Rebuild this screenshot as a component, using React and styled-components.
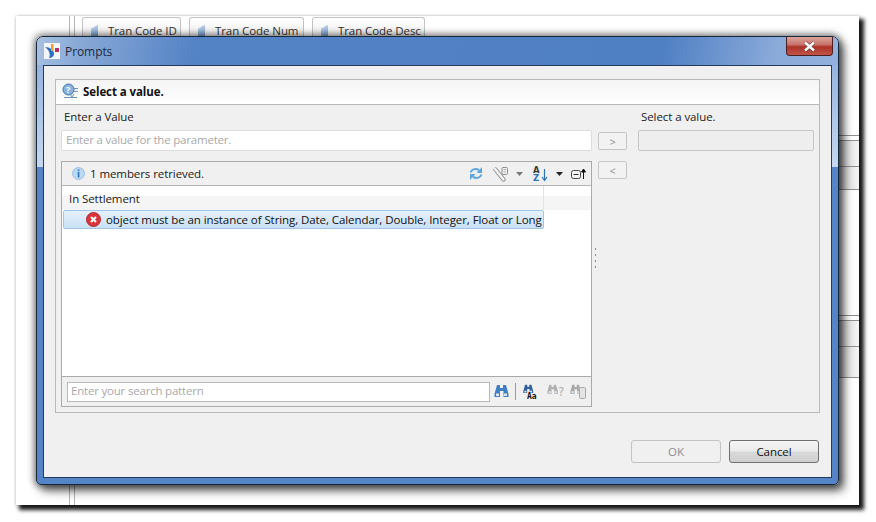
import styled, { createGlobalStyle } from 'styled-components';

const GlobalStyle = createGlobalStyle`
  html, body {
    margin: 0;
    padding: 0;
    background: #fff;
  }
  body {
    width: 876px;
    height: 522px;
    overflow: hidden;
    font-family: "Open Sans", "Noto Sans", sans-serif;
    font-size: 11.5px;
    letter-spacing: -0.08px;
    color: #1a1a1a;
  }
  svg {
    flex: none;
  }
`;

// the app window behind the dialog
const Sheet = styled.div`
  position: relative;
  box-sizing: border-box;
  width: 843px;
  height: 489px;
  margin: 16px 0 0 16px;
  padding-left: 53px;
  background: #fff;
  box-shadow: 0 0 3px rgba(0, 0, 0, 0.25), 4px 4px 4px 1px rgba(0, 0, 0, 0.9);
`;

const BackRail = styled.div`
  height: 100%;
  padding-left: 4px;
  border-left: 1px solid #b5b5b5;
`;

const BackTabs = styled.div`
  display: flex;
  align-items: flex-start;
  gap: 8px;
  height: 100%;
  padding: 1px 0 0 7px;
  box-sizing: border-box;
  border-left: 1px solid #b5b5b5;
`;

const BackTab = styled.div`
  display: flex;
  align-items: center;
  box-sizing: border-box;
  width: ${(p) => p.$w}px;
  height: 20px;
  padding: 6px 0 0 8px;
  gap: 10px;
  border: 1px solid #c4c4c4;
  border-bottom: 0;
  border-radius: 3px 3px 0 0;
  background: linear-gradient(#fff, #f1f1f1);
  color: #333;
  white-space: nowrap;
`;

const TabMark = styled.span`
  display: block;
  flex: none;
  width: 7px;
  height: 12px;
  background: linear-gradient(160deg, #c9dcf0, #6d9bcb);
  clip-path: polygon(100% 0, 100% 100%, 0 100%, 0 35%);
`;

const BackBand = styled.div`
  position: absolute;
  right: 0;
  width: 20px;
  top: ${(p) => p.$top}px;
  height: ${(p) => p.$h}px;
  box-sizing: border-box;
  border-top: 1px solid #8f8f8f;
  border-bottom: 1px solid #8f8f8f;
  background: ${(p) => (p.$plain ? '#fff' : 'linear-gradient(90deg, #d2d2d2, #f5f5f5)')};
`;

const Dialog = styled.div`
  position: absolute;
  left: 20px;
  top: 20px;
  box-sizing: border-box;
  width: 803px;
  height: 449px;
  display: flex;
  flex-direction: column;
  padding: 0 6px 6px 6px;
  border: 1px solid #17273c;
  border-radius: 7px 7px 5px 5px;
  background:
    linear-gradient(180deg, transparent 0, transparent 130px, #5585c6 130px, #5585c6 100%),
    linear-gradient(180deg, #8aaadb 0, #a4bfe4 60px, #c6d7ef 129px);
  box-shadow: 0 0 7px 2px rgba(0, 0, 0, 0.5), 5px 6px 10px rgba(0, 0, 0, 0.55);
`;

const TitleBar = styled.div`
  flex: none;
  display: flex;
  align-items: center;
  gap: 5px;
  height: 28px;
  margin: 0 -6px;
  padding: 0 0 0 7px;
  border-radius: 6px 6px 0 0;
  background:
    linear-gradient(100deg, #a9c1e2 0, #8aaad7 5%, #5382c5 20%, #5080c4 78%, #8aaad9 92%, #94b1dc 100%);
  color: #1c2a3c;
  font-size: 12px;
`;

const CloseButton = styled.div`
  position: absolute;
  right: 5px;
  top: 0;
  display: flex;
  align-items: center;
  justify-content: center;
  box-sizing: border-box;
  width: 47px;
  height: 19px;
  border: 1px solid #4a1f1f;
  border-top: 0;
  border-radius: 0 0 4px 4px;
  background: linear-gradient(#dba49c 0, #c8736a 42%, #ab3226 55%, #c25548 100%);
`;

const Client = styled.div`
  flex: 1;
  display: flex;
  flex-direction: column;
  padding: 13px 11px 0;
  border: 1px solid #233a58;
  background: #f0f0f0;
`;

const Panel = styled.div`
  box-sizing: border-box;
  height: 334px;
  display: flex;
  flex-direction: column;
  border: 1px solid #b9b9b9;
`;

const PanelHeader = styled.div`
  flex: none;
  box-sizing: border-box;
  display: flex;
  align-items: center;
  gap: 5px;
  height: 25px;
  padding: 0 0 2px 6px;
  border-bottom: 1px solid #b9b9b9;
  background: linear-gradient(#f4f4f4, #fff);
  font-weight: 700;
  color: #111;
`;

const PanelBody = styled.div`
  flex: 1;
  display: grid;
  grid-template-columns: 531px 46px 176px;
  grid-template-rows: 25px 21px 10px 1fr;
  padding: 0 0 5px 5px;
`;

const Label = styled.div`
  display: flex;
  align-items: center;
  padding: 0 0 2px 3px;
  color: #222;
`;

const Field = styled.div`
  box-sizing: border-box;
  height: 21px;
  display: flex;
  align-items: center;
  padding: 0 0 2px 4px;
  border: 1px solid ${(p) => (p.$off ? '#c6c6c6' : '#dcdcdc')};
  border-radius: 2px;
  background: ${(p) => (p.$off ? '#eee' : '#fff')};
  color: #a9a9a9;
  letter-spacing: -0.2px;
`;

const ArrowCell = styled.div`
  display: flex;
  padding: 2px 0 0 6px;
`;

const ArrowButton = styled.div`
  box-sizing: border-box;
  width: 29px;
  height: 18px;
  display: flex;
  align-items: center;
  justify-content: center;
  border: 1px solid #c6c6c6;
  border-radius: 2px;
  background: #f2f2f2;
  color: #8a8a8a;
  font-size: 11px;
`;

const SideColumn = styled.div`
  display: flex;
  flex-direction: column;
  align-items: flex-start;
  gap: 69px;
  padding-left: 6px;
`;

const Grip = styled.div`
  display: flex;
  flex-direction: column;
  gap: 4px;
  margin-left: -3px;
  span {
    display: block;
    width: 1px;
    height: 2px;
    background: #8c8c8c;
  }
`;

const ListBox = styled.div`
  box-sizing: border-box;
  height: 246px;
  display: flex;
  flex-direction: column;
  border: 1px solid #aaa;
`;

const ListToolbar = styled.div`
  flex: none;
  display: flex;
  align-items: center;
  height: 23px;
  padding: 0 5px 0 10px;
  border-bottom: 1px solid #b3b3b3;
  background: #f0f0f0;
`;

const Message = styled.span`
  flex: 1;
  margin-left: 5px;
  color: #222;
`;

const ToolIcon = styled.svg`
  display: block;
  flex: none;
  margin-left: ${(p) => p.$gap || 0}px;
`;

const ColumnHead = styled.div`
  flex: none;
  display: flex;
  height: 24px;
  background: linear-gradient(#fff 0, #fff 40%, #f6f6f6 42%, #f4f4f4 100%);
`;

const HeadCell = styled.div`
  display: flex;
  align-items: center;
  box-sizing: border-box;
  width: 482px;
  padding-left: 7px;
  border-right: 1px solid #e2e2e2;
  color: #222;
`;

const Rows = styled.div`
  flex: 1;
  background: #fff;
  padding-left: 1px;
`;

const SelectedRow = styled.div`
  box-sizing: border-box;
  width: 481px;
  height: 19px;
  display: flex;
  align-items: center;
  gap: 5px;
  padding-left: 22px;
  border: 1px solid #9fc6e8;
  border-radius: 2px;
  background: linear-gradient(#e6f1fb, #c9e0f6);
  color: #111;
  white-space: nowrap;
`;

const SearchBar = styled.div`
  flex: none;
  box-sizing: border-box;
  display: flex;
  align-items: center;
  height: 30px;
  padding-left: 5px;
  border-top: 1px solid #aaa;
  background: #f0f0f0;
`;

const SearchField = styled.div`
  box-sizing: border-box;
  width: 423px;
  height: 20px;
  display: flex;
  align-items: center;
  padding: 0 0 2px 3px;
  border: 1px solid #b9b9b9;
  background: #fff;
  color: #a9a9a9;
  letter-spacing: -0.2px;
`;

const Divider = styled.span`
  display: block;
  width: 1px;
  height: 17px;
  margin: 0 7px 0 6px;
  background: #9a9a9a;
`;

const Footer = styled.div`
  display: flex;
  justify-content: flex-end;
  gap: 8px;
  padding: 27px 1px 0 0;
`;

const DialogButton = styled.div`
  box-sizing: border-box;
  width: 90px;
  height: 23px;
  display: flex;
  align-items: center;
  justify-content: center;
  padding-bottom: 1px;
  border-radius: 3px;
  border: 1px solid ${(p) => (p.$off ? '#c4c4c4' : '#6f6f6f')};
  background: ${(p) => (p.$off ? '#f0f0f0' : 'linear-gradient(#f4f4f4 0, #ececec 48%, #d9d9d9 52%, #cfcfcf 100%)')};
  color: ${(p) => (p.$off ? '#8e8e8e' : '#111')};
`;

// small hand drawn icons
const AppLogo = () => (
  <svg width="16" height="16" viewBox="0 0 16 16">
    <rect width="16" height="16" fill="#f4f6fa" />
    <path d="M1 4c5 0 9 3 9 7 0 2-2 4-5 4 2-4 0-8-4-11z" fill="#2a6fc0" />
    <rect x="7" y="1" width="2.500" height="7" fill="#f0a030" />
    <rect x="11" y="5" width="4" height="4" fill="#b0306a" />
  </svg>
);

const HelpIcon = () => (
  <svg width="16" height="17" viewBox="0 0 16 17">
    <circle cx="6.500" cy="6.500" r="5.500" fill="#86b3e0" stroke="#3d74ad" />
    <text x="4" y="10" fontSize="9" fontWeight="700" fill="#fff" fontFamily="Open Sans">?</text>
    <path d="M11 5.500h5M11 8.500h5M2 14.500h13M8 11l2 3M12 11l-2 3" stroke="#6d93b5" strokeWidth="1" />
  </svg>
);

const InfoIcon = () => (
  <svg width="13" height="13" viewBox="0 0 13 13">
    <circle cx="6.500" cy="6.500" r="6" fill="#bcd8f2" stroke="#9cc0e2" />
    <rect x="5.700" y="2.400" width="1.700" height="1.700" fill="#2b78c2" />
    <rect x="5.700" y="5" width="1.700" height="5.400" fill="#2b78c2" />
  </svg>
);

const RefreshIcon = () => (
  <ToolIcon width="14" height="15" viewBox="0 0 14 15" fill="none">
    <path d="M1.500 6.500C2.500 3.500 6 2 10 4" stroke="#5ba6de" strokeWidth="2" />
    <path d="M13 1v6H7.500z" fill="#5ba6de" />
    <path d="M12.500 8.500C11.500 11.500 8 13 4 11" stroke="#5ba6de" strokeWidth="2" />
    <path d="M1 14V8h5.500z" fill="#5ba6de" />
  </ToolIcon>
);

const WrenchIcon = () => (
  <ToolIcon $gap={9} width="16" height="16" viewBox="0 0 16 16" fill="none">
    <path d="M3.500 3.500l8 10" stroke="#8f8f8f" strokeWidth="4.400" strokeLinecap="round" />
    <path d="M3.500 3.500l8 10" stroke="#f4f4f4" strokeWidth="2.400" strokeLinecap="round" />
    <path d="M1 1l3 3" stroke="#f0f0f0" strokeWidth="2" />
    <rect x="10" y="1.500" width="5.500" height="7" rx="1" fill="#f3f3f3" stroke="#8f8f8f" />
    <path d="M11.500 3.500h2.500M11.500 6h2.500" stroke="#a8a8a8" />
  </ToolIcon>
);

const DropArrow = ({ color, gap }) => (
  <ToolIcon $gap={gap} width="7" height="4" viewBox="0 0 7 4">
    <path d="M0 0h7L3.500 4z" fill={color} />
  </ToolIcon>
);

const SortIcon = () => (
  <ToolIcon $gap={10} width="15" height="17" viewBox="0 0 15 17">
    <text x="0" y="7.500" fontSize="8.500" fontWeight="700" fill="#3a3a3a" fontFamily="DejaVu Sans">A</text>
    <text x="0" y="16" fontSize="8.500" fontWeight="700" fill="#2f72b8" fontFamily="DejaVu Sans">Z</text>
    <path d="M11.500 4v11M9 12l2.500 3.500L14 12" stroke="#2f72b8" strokeWidth="1.200" fill="none" />
  </ToolIcon>
);

const CollapseIcon = () => (
  <ToolIcon $gap={8} width="15" height="12" viewBox="0 0 15 12">
    <rect x=".5" y="2.500" width="9" height="8" rx="2" fill="#f4f4f4" stroke="#444" />
    <path d="M2.500 6.500h5" stroke="#333" />
    <path d="M12.500 11V3M10.500 4l2-3 2 3z" stroke="#111" fill="#111" strokeWidth="1" />
  </ToolIcon>
);

const ErrorIcon = () => (
  <svg width="15" height="15" viewBox="0 0 15 15">
    <circle cx="7.500" cy="7.500" r="7" fill="#d8353a" stroke="#bb2a30" />
    <path d="M5 5l5 5M10 5l-5 5" stroke="#fff" strokeWidth="2" />
  </svg>
);

// one pair of barrels, scaled down where a badge shares the icon
const Barrels = ({ color, scale = 1 }) => (
  <g transform={`scale(${scale})`}>
    <path d="M3 1h3v3h3V1h3l2.500 9v3h-5V7H6v6H.5v-3z" fill={color} />
    <path d="M2 9.500h3V12H2zM10 9.500h3V12h-3z" fill="#dce8f6" />
  </g>
);

const SearchTool = ({ width, gap, children }) => (
  <ToolIcon $gap={gap} width={width} height="16" viewBox={`0 0 ${width} 16`}>
    {children}
  </ToolIcon>
);

const App = () => {
  return (
    <>
      <GlobalStyle />
      <Sheet>
        <BackRail>
          <BackTabs>
            <BackTab $w={99}><TabMark />Tran Code ID</BackTab>
            <BackTab $w={115}><TabMark />Tran Code Num</BackTab>
            <BackTab $w={113}><TabMark />Tran Code Desc</BackTab>
          </BackTabs>
        </BackRail>
        <BackBand $plain $top={119} $h={6} />
        <BackBand $top={124} $h={27} />
        <BackBand $top={150} $h={24} />
        <BackBand $plain $top={299} $h={6} />
        <BackBand $top={304} $h={27} />
        <BackBand $top={330} $h={32} />
        <Dialog>
          <TitleBar>
            <AppLogo />
            Prompts
          </TitleBar>
          <CloseButton>
            <svg width="13" height="11" viewBox="0 0 13 11">
              <path d="M2 1.500l9 8M11 1.500l-9 8" stroke="#5a3030" strokeWidth="3.600" />
              <path d="M2 1.500l9 8M11 1.500l-9 8" stroke="#fff" strokeWidth="2.400" />
            </svg>
          </CloseButton>
          <Client>
            <Panel>
              <PanelHeader>
                <HelpIcon />
                Select a value.
              </PanelHeader>
              <PanelBody>
                <Label>Enter a Value</Label>
                <div />
                <Label>Select a value.</Label>
                <Field>Enter a value for the parameter.</Field>
                <ArrowCell><ArrowButton>&gt;</ArrowButton></ArrowCell>
                <Field $off />
                <div /><div /><div />
                <ListBox>
                  <ListToolbar>
                    <InfoIcon />
                    <Message>1 members retrieved.</Message>
                    <RefreshIcon />
                    <WrenchIcon />
                    <DropArrow color="#777" gap={8} />
                    <SortIcon />
                    <DropArrow color="#222" gap={8} />
                    <CollapseIcon />
                  </ListToolbar>
                  <ColumnHead>
                    <HeadCell>In Settlement</HeadCell>
                  </ColumnHead>
                  <Rows>
                    <SelectedRow>
                      <ErrorIcon />
                      object must be an instance of String, Date, Calendar, Double, Integer, Float or Long
                    </SelectedRow>
                  </Rows>
                  <SearchBar>
                    <SearchField>Enter your search pattern</SearchField>
                    <SearchTool width={15} gap={4}>
                      <Barrels color="#3f7fc4" />
                    </SearchTool>
                    <Divider />
                    <SearchTool width={17}>
                      <Barrels color="#2f5f9f" scale={0.7} />
                      <text x="4" y="15" fontSize="8" fontWeight="700" fill="#111" fontFamily="DejaVu Sans Mono">Aa</text>
                    </SearchTool>
                    <SearchTool width={17} gap={7}>
                      <Barrels color="#b0b0b0" scale={0.75} />
                      <text x="11" y="12" fontSize="12" fill="#b0b0b0" fontFamily="DejaVu Sans">?</text>
                    </SearchTool>
                    <SearchTool width={16} gap={6}>
                      <Barrels color="#a8a8a8" scale={0.75} />
                      <rect x="9.500" y="3.500" width="6" height="11" rx="1" fill="#e4e4e4" stroke="#a8a8a8" />
                    </SearchTool>
                  </SearchBar>
                </ListBox>
                <SideColumn>
                  <ArrowButton>&lt;</ArrowButton>
                  <Grip>
                    <span /><span /><span /><span />
                  </Grip>
                </SideColumn>
                <div />
              </PanelBody>
            </Panel>
            <Footer>
              <DialogButton $off>OK</DialogButton>
              <DialogButton>Cancel</DialogButton>
            </Footer>
          </Client>
        </Dialog>
      </Sheet>
    </>
  );
};

export default App;
